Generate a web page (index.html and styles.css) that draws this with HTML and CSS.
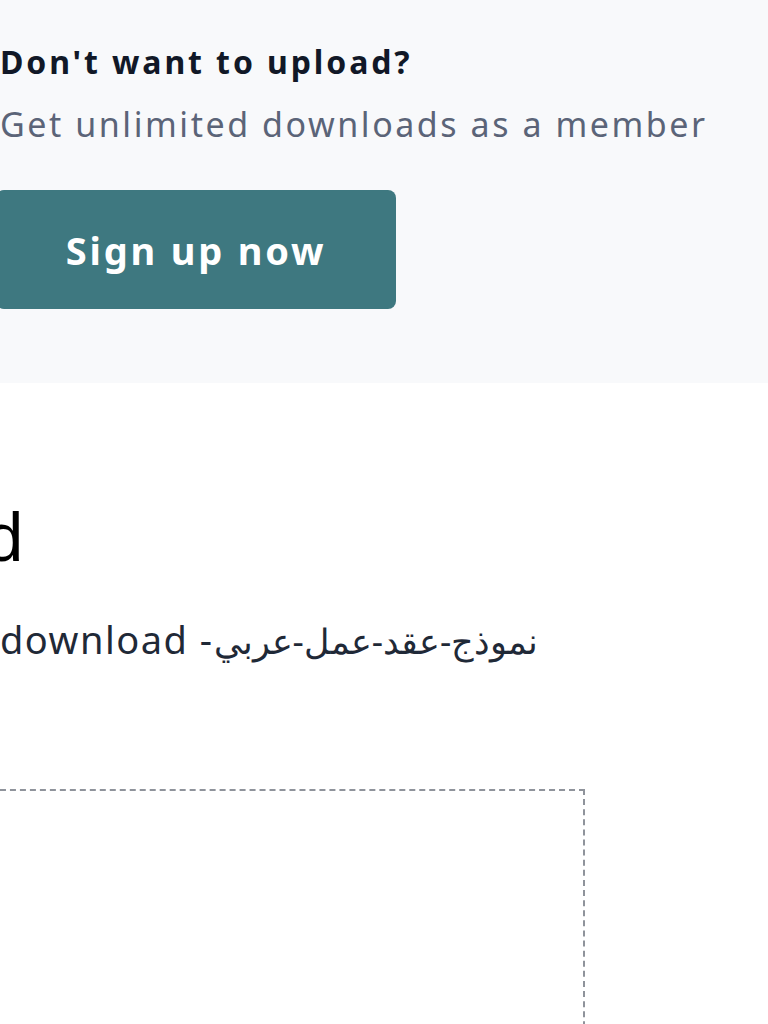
FILE: index.html
```html
<!DOCTYPE html>
<html lang="en">
<head>
<meta charset="utf-8">
<title>Download</title>
<link rel="stylesheet" href="styles.css">
</head>
<body>
<section class="promo">
  <h2 class="promo-title">Don't want to upload?</h2>
  <p class="promo-text">Get unlimited downloads as a member</p>
  <a class="promo-btn" href="#">Sign up now</a>
</section>
<section class="main">
  <h1 class="main-title">Download</h1>
  <p class="file-name">download -<span class="ar" lang="ar">نموذج-عقد-عمل-عربي</span></p>
  <div class="dropzone"></div>
</section>
</body>
</html>
```
FILE: styles.css
```css
html, body {
  margin: 0;
  padding: 0;
  background: #ffffff;
  overflow: hidden;
}
body {
  width: 768px;
  height: 1024px;
  font-family: "Noto Sans", "Open Sans", sans-serif;
}
.promo {
  background: #f8f9fb;
  height: 383px;
  box-sizing: border-box;
  padding-top: 42px;
  display: flex;
  flex-direction: column;
  align-items: flex-start;
}
.promo-title {
  margin: 0;
  font-size: 32px;
  line-height: 40px;
  font-weight: 700;
  letter-spacing: 2.9px;
  color: #111827;
}
.promo-text {
  margin: 20px 0 0;
  font-size: 34px;
  line-height: 44px;
  letter-spacing: 2.55px;
  color: #5b6478;
}
.promo-btn {
  margin: 44px 0 0 -4px;
  width: 400px;
  height: 119px;
  border-radius: 8px;
  background: #3e7880;
  color: #ffffff;
  font-size: 38px;
  font-weight: 700;
  letter-spacing: 2.8px;
  text-decoration: none;
  display: flex;
  align-items: center;
  justify-content: center;
}
.main {
  display: flex;
  flex-direction: column;
  align-items: flex-start;
}
.main-title {
  margin: 114px 0 0 -279px;
  font-family: "Liberation Sans", Arial, sans-serif;
  font-size: 68px;
  line-height: 80px;
  font-weight: 400;
  color: #000000;
}
.file-name {
  margin: 37px 0 0;
  font-size: 38px;
  line-height: 50px;
  letter-spacing: 1.5px;
  color: #1f2937;
}
.ar {
  font-size: 35px;
  letter-spacing: 0;
}
.dropzone {
  margin: 123px 0 0 -20px;
  width: 605px;
  height: 400px;
  border: 2px dashed #8f939b;
  box-sizing: border-box;
}
```
